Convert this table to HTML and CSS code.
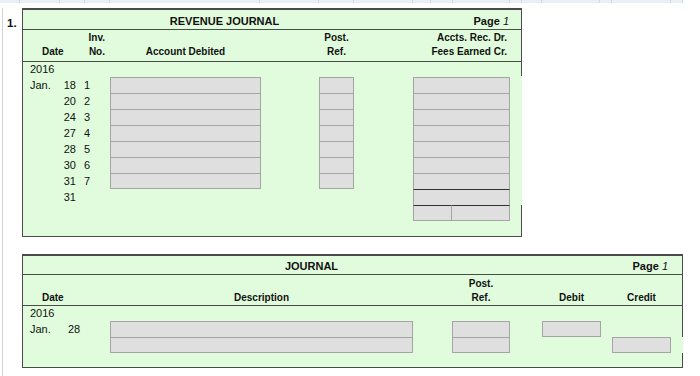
FILE: index.html
```html
<!DOCTYPE html>
<html lang="en">
<head>
<meta charset="utf-8">
<title>Revenue Journal</title>
<link rel="stylesheet" href="styles.css">
</head>
<body>
<div class="strip">
  <span class="s20"></span><span class="s40"></span><span class="s25"></span><span class="s25"></span>
  <span class="s150"></span><span class="s59"></span><span class="s35"></span><span class="s59"></span>
  <span class="s18"></span><span class="s22"></span><span class="s57"></span><span class="s12"></span>
  <span class="s20"></span><span class="s58"></span><span class="s12"></span><span class="s59"></span><span class="s12"></span>
</div>

<div class="sheet">
  <section class="block block-rev">
    <div class="num">1.</div>
    <div class="ledger ledger-rev">
      <div class="title-row">
        <div class="title-main rev-title">REVENUE JOURNAL</div>
        <div class="page-no">Page <i>1</i></div>
      </div>

      <div class="head-row rev-head">
        <div class="h-date">Date</div>
        <div class="h-inv">Inv.<br>No.</div>
        <div class="h-center">Account Debited</div>
        <div></div>
        <div class="h-center">Post.<br>Ref.</div>
        <div></div>
        <div class="h-right">Accts. Rec. Dr.<br>Fees Earned Cr.</div>
      </div>

      <div class="rev-body">
        <div class="year">2016</div>

        <div class="rev-row">
          <span class="month">Jan.</span><span class="day">18</span><span class="inv">1</span>
          <div class="field c-acct"></div><div class="field c-post"></div><div class="field c-amt"></div>
        </div>
        <div class="rev-row">
          <span class="month"></span><span class="day">20</span><span class="inv">2</span>
          <div class="field c-acct"></div><div class="field c-post"></div><div class="field c-amt"></div>
        </div>
        <div class="rev-row">
          <span class="month"></span><span class="day">24</span><span class="inv">3</span>
          <div class="field c-acct"></div><div class="field c-post"></div><div class="field c-amt"></div>
        </div>
        <div class="rev-row">
          <span class="month"></span><span class="day">27</span><span class="inv">4</span>
          <div class="field c-acct"></div><div class="field c-post"></div><div class="field c-amt"></div>
        </div>
        <div class="rev-row">
          <span class="month"></span><span class="day">28</span><span class="inv">5</span>
          <div class="field c-acct"></div><div class="field c-post"></div><div class="field c-amt"></div>
        </div>
        <div class="rev-row">
          <span class="month"></span><span class="day">30</span><span class="inv">6</span>
          <div class="field c-acct"></div><div class="field c-post"></div><div class="field c-amt"></div>
        </div>
        <div class="rev-row">
          <span class="month"></span><span class="day">31</span><span class="inv">7</span>
          <div class="field c-acct closed"></div><div class="field c-post closed"></div><div class="field c-amt"></div>
        </div>
        <div class="rev-row">
          <span class="month"></span><span class="day">31</span><span class="inv"></span>
          <div></div><div></div><div class="field c-amt total"></div>
        </div>
        <div class="rev-row">
          <span class="month"></span><span class="day"></span><span class="inv"></span>
          <div></div><div></div>
          <div class="c-amt split">
            <div class="field total closed part-a"></div>
            <div class="field total closed part-b"></div>
          </div>
        </div>
      </div>
    </div>
  </section>

  <section class="block block-gen">
    <div class="num"></div>
    <div class="ledger ledger-gen">
      <div class="title-row">
        <div class="title-main gen-title">JOURNAL</div>
        <div class="page-no">Page <i>1</i></div>
      </div>

      <div class="head-row gen-head">
        <div class="h-date">Date</div>
        <div class="h-center">Description</div>
        <div></div>
        <div class="h-center">Post.<br>Ref.</div>
        <div></div>
        <div class="h-center">Debit</div>
        <div></div>
        <div class="h-center">Credit</div>
      </div>

      <div class="gen-body">
        <div class="year">2016</div>
        <div class="gen-row">
          <span class="month">Jan.</span><span class="gday">28</span>
          <div class="field g-desc"></div><div class="field g-post"></div>
          <div class="field g-debit closed"></div><div></div>
        </div>
        <div class="gen-row">
          <span class="month"></span><span class="gday"></span>
          <div class="field g-desc closed"></div><div class="field g-post closed"></div>
          <div></div><div class="field g-credit closed"></div>
        </div>
      </div>
    </div>
  </section>
</div>
</body>
</html>
```

FILE: styles.css
```css
* {
  box-sizing: border-box;
}

body {
  margin: 0;
  background: #fff;
  color: #111;
  font-family: "Liberation Sans", Arial, Helvetica, sans-serif;
}

/* spreadsheet column strip along the top edge */
.strip {
  display: flex;
  width: 683px;
  height: 3px;
  background: #e9eef7;
}
.strip span {
  border-right: 1px solid #d0d9e7;
}
.s12 { width: 12px; }
.s18 { width: 18px; }
.s20 { width: 20px; }
.s22 { width: 22px; }
.s25 { width: 25px; }
.s35 { width: 35px; }
.s40 { width: 40px; }
.s57 { width: 57px; }
.s58 { width: 58px; }
.s59 { width: 59px; }
.s150 { width: 150px; }

.sheet {
  margin-left: 2px;
  border-left: 1px solid #d2d2d2;
  height: 373px;
}

.block {
  display: flex;
  align-items: flex-start;
}
.block-rev {
  margin-top: 5px;
}
.block-gen {
  margin-top: 17px;
}

.num {
  width: 19px;
  height: 24px;
  padding: 8px 0 0 4px;
  font-size: 11.5px;
  font-weight: bold;
  line-height: 14px;
}

/* journal frame: the right rule is drawn in two pieces */
.ledger {
  border: 1px solid #4b4b4b;
  border-top-width: 2px;
  border-right: 0;
}
.ledger-rev {
  width: 500px;
  padding-bottom: 15px;
  background:
    linear-gradient(#4b4b4b, #4b4b4b) right top / 1px 66px no-repeat,
    linear-gradient(#4b4b4b, #4b4b4b) right bottom / 1px 31px no-repeat,
    #e1fcdd;
}
.ledger-gen {
  width: 661px;
  padding-bottom: 14px;
  background:
    linear-gradient(#4b4b4b, #4b4b4b) right top / 1px 81px no-repeat,
    linear-gradient(#4b4b4b, #4b4b4b) right bottom / 1px 14px no-repeat,
    #e1fcdd;
}

.title-row {
  display: flex;
  height: 20px;
  padding-top: 3px;
  border-bottom: 1px solid #4b4b4b;
  font-size: 11px;
  font-weight: bold;
  line-height: 16px;
}
.ledger-gen .title-row {
  height: 19px;
  line-height: 15px;
}
.title-main {
  text-align: center;
}
.rev-title {
  width: 403px;
}
.gen-title {
  width: 577px;
}
.page-no {
  margin-left: auto;
  padding-right: 13px;
}
.ledger-gen .page-no {
  padding-right: 15px;
}
.page-no i {
  font-weight: normal;
}

.head-row {
  display: grid;
  align-items: end;
  padding-top: 1px;
  border-bottom: 1px solid #4b4b4b;
  font-size: 10px;
  font-weight: bold;
  line-height: 14px;
}
.rev-head {
  height: 32px;
  padding-bottom: 2px;
  grid-template-columns: 53px 34px 151px 58px 35px 59px 97px 1fr;
}
.gen-head {
  height: 31px;
  grid-template-columns: 87px 303px 39px 58px 32px 59px 11px 59px 1fr;
}
.h-date {
  padding-left: 19px;
}
.h-inv {
  text-align: right;
  padding-right: 5px;
}
.h-center {
  text-align: center;
}
.h-right {
  text-align: right;
  padding-right: 3px;
}

/* body rows */
.year {
  height: 15px;
  padding-left: 7px;
  font-size: 11px;
  line-height: 15px;
}
.rev-row,
.gen-row {
  display: grid;
  height: 16px;
  padding-left: 7px;
  font-size: 11px;
  line-height: 16px;
}
.rev-row {
  grid-template-columns: 30px 16px 34px 151px 58px 35px 59px 97px;
}
.rev-row > :nth-child(4) { grid-column: 4; }
.rev-row > :nth-child(5) { grid-column: 6; }
.rev-row > :nth-child(6) { grid-column: 8; }

.gen-row {
  grid-template-columns: 38px 20px 22px 303px 39px 58px 32px 59px 11px 59px;
}
.gen-row > :nth-child(3) { grid-column: 4; }
.gen-row > :nth-child(4) { grid-column: 6; }
.gen-row > :nth-child(5) { grid-column: 8; }
.gen-row > :nth-child(6) { grid-column: 10; }

.day {
  text-align: right;
}
.inv {
  padding-left: 8px;
}

.field {
  height: 16px;
  background: #dfdfdf;
  border: 1px solid #a5a5a5;
  border-bottom: 0;
}
.field.closed {
  border-bottom: 1px solid #a5a5a5;
}
.field.total {
  border-top-color: #333;
}

.split {
  display: flex;
}
.part-a {
  width: 39px;
}
.part-b {
  flex: 1;
  border-left: 0;
}
```
